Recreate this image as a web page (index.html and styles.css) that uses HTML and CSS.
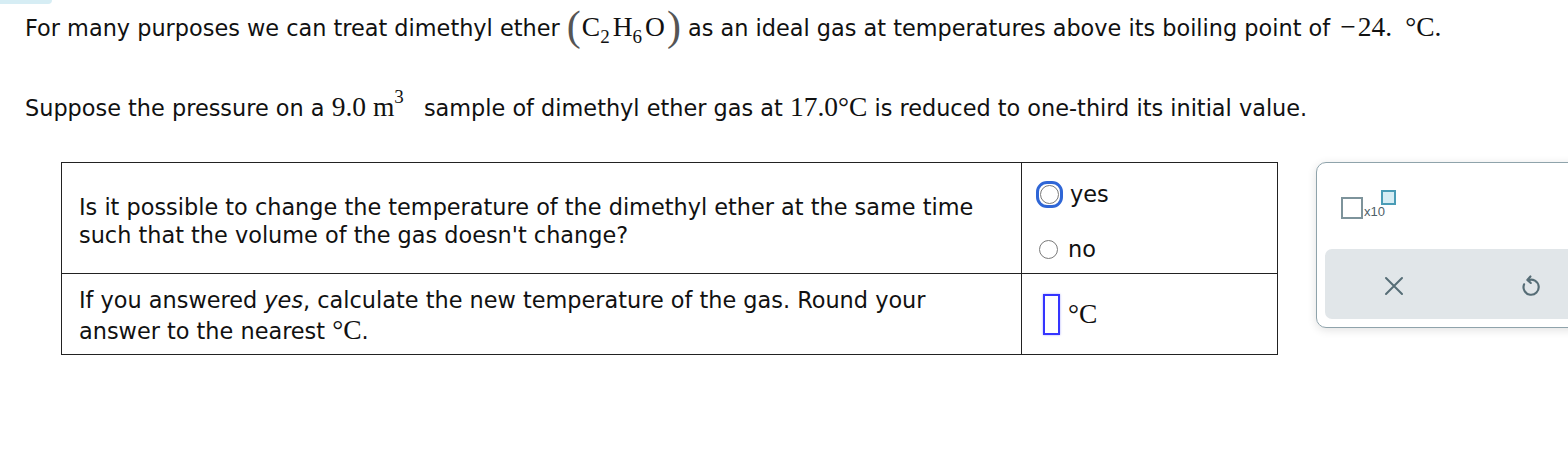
FILE: index.html
```html
<!DOCTYPE html>
<html>
<head>
<meta charset="utf-8">
<link rel="stylesheet" href="styles.css">
</head>
<body>
<div class="tab"></div>
<div class="page">
  <p class="line l1">For many purposes we can treat dimethyl ether <span class="math"><span class="paren pl">(</span>C<sub>2</sub>H<sub>6</sub>O<span class="paren pr">)</span></span> as an ideal gas at temperatures above its boiling point of <span class="math"><span class="minus">−</span>24.<span class="deg">°C.</span></span></p>
  <p class="line l2">Suppose the pressure on a <span class="math">9.0 m<sup>3</sup></span> sample of dimethyl ether gas at <span class="math">17.0°C</span> is reduced to one-third its initial value.</p>
  <div class="row">
    <table class="qt">
      <tr class="r1">
        <td class="q">Is it possible to change the temperature of the dimethyl ether at the same time<br>such that the volume of the gas doesn't change?</td>
        <td class="a a1">
          <div class="opts">
            <div class="opt"><span class="ring"><span class="radio"></span></span><span class="lbl">yes</span></div>
            <div class="opt opt2"><span class="radio"></span><span class="lbl">no</span></div>
          </div>
        </td>
      </tr>
      <tr class="r2">
        <td class="q">If you answered <i>yes</i>, calculate the new temperature of the gas. Round your<br>answer to the nearest <span class="math">°C</span>.</td>
        <td class="a a2"><span class="blank"></span><span class="math unit">°C</span></td>
      </tr>
    </table>
    <div class="panel">
      <div class="sci"><span class="box"></span><span class="x10">x10</span><span class="exp"></span></div>
      <div class="actions">
        <span class="btn">
          <svg width="22" height="22" viewBox="0 0 22 22"><path d="M3 3 L19 19 M19 3 L3 19" stroke="#566d76" stroke-width="2" fill="none" stroke-linecap="round"/></svg>
        </span>
        <span class="btn">
          <svg width="26" height="26" viewBox="0 0 24 24"><path d="M9.5 6.6 A7 7 0 1 1 5.6 10.5" stroke="#566d76" stroke-width="2" fill="none" stroke-linecap="round"/><path d="M11.5 3.2 L8.6 6.4 L11.8 9.2" stroke="#566d76" stroke-width="2" fill="none" stroke-linecap="round" stroke-linejoin="round"/></svg>
        </span>
      </div>
    </div>
  </div>
</div>
</body>
</html>
```

FILE: styles.css
```css
html, body {
  margin: 0;
  padding: 0;
  background: #fff;
  overflow: hidden;
}
body {
  font-family: "DejaVu Sans", Verdana, sans-serif;
  font-size: 22.4px;
  color: #111;
  width: 1568px;
  height: 462px;
}
.tab {
  width: 52px;
  height: 4px;
  background: #d6edf4;
  border-bottom-right-radius: 8px;
}
.page {
  padding-left: 25px;
}
.line {
  margin: 0;
  line-height: 44px;
  height: 44px;
  white-space: nowrap;
}
.l1 {
  margin-top: 2px;
}
.l2 {
  margin-top: 36px;
}
.math {
  font-family: "Liberation Serif", "Times New Roman", serif;
  font-size: 27.5px;
  line-height: 0;
}
.math sub {
  font-size: 19px;
  vertical-align: -7px;
  line-height: 0;
  margin-right: 3px;
}
.math sup {
  font-size: 19px;
  vertical-align: 13px;
  line-height: 0;
  margin-right: 13px;
}
.paren {
  font-size: 42px;
  line-height: 0;
  color: #555;
  vertical-align: -4px;
  font-weight: 300;
}
.pl {
  margin-right: 1px;
}
.pr {
  margin-left: 2px;
}
.minus {
  margin-left: 3px;
  margin-right: 2px;
}
.deg {
  margin-left: 13px;
}
.row {
  display: flex;
  align-items: flex-start;
  margin-top: 32px;
}
.qt {
  flex-shrink: 0;
  margin-left: 36px;
  border-collapse: collapse;
  width: 1217px;
}
.qt td {
  border: 1px solid #222;
  padding: 0;
}
.q {
  width: 942px;
  padding-left: 17px !important;
  vertical-align: middle;
}
.r1 {
  height: 111px;
  line-height: 28px;
}
.r1 .q {
  padding-top: 6px !important;
}
.r2 {
  height: 81px;
  line-height: 30px;
}
.r2 .q {
  padding-top: 3px !important;
}
.r2 .math {
  line-height: 30px;
}
.a1 {
  vertical-align: top;
}
.opts {
  padding: 17px 0 0 14px;
}
.opt {
  display: flex;
  align-items: center;
  height: 28px;
}
.opt2 {
  margin-top: 27px;
  padding-left: 3px;
}
.ring {
  display: inline-flex;
  border: 3px solid #2f66d6;
  border-radius: 11px;
  padding: 1px;
}
.radio {
  display: inline-block;
  width: 17px;
  height: 17px;
  border: 1.5px solid #7a7a7a;
  border-radius: 50%;
  background: #fff;
}
.lbl {
  margin-left: 7px;
}
.opt2 .lbl {
  margin-left: 10px;
}
.a2 {
  vertical-align: middle;
  padding-left: 21px !important;
}
.blank {
  display: inline-block;
  width: 13px;
  height: 37px;
  border: 2px solid #3535ff;
  box-shadow: 0 0 2px rgba(80, 80, 255, 0.5);
  vertical-align: middle;
}
.unit {
  margin-left: 8px;
  vertical-align: middle;
}
.panel {
  flex-shrink: 0;
  margin-left: 38px;
  width: 270px;
  height: 166px;
  border: 1px solid #8fa3ab;
  border-radius: 10px;
  box-shadow: 0 2px 10px rgba(0, 0, 0, 0.12);
  box-sizing: border-box;
  display: flex;
  flex-direction: column;
  padding: 0 0 8px 8px;
}
.sci {
  display: flex;
  align-items: flex-start;
  margin-top: 25px;
  margin-left: 16px;
  height: 33px;
}
.box {
  width: 18px;
  height: 18px;
  border: 2px solid #7d939b;
  margin-top: 9px;
}
.x10 {
  font-family: "Liberation Sans", Arial, sans-serif;
  font-size: 13px;
  color: #4d6068;
  margin-top: 16px;
  margin-left: 1px;
}
.exp {
  width: 11px;
  height: 11px;
  border: 2px solid #4a9cb6;
  background: #d6edf4;
  margin-left: -4px;
  margin-top: 2px;
}
.actions {
  margin-top: auto;
  height: 70px;
  background: #e1e6e9;
  border-radius: 7px;
  display: flex;
  align-items: center;
}
.btn {
  display: flex;
  align-items: center;
  justify-content: center;
  width: 137px;
  height: 70px;
  padding-top: 3px;
  box-sizing: border-box;
  flex-shrink: 0;
}
```
